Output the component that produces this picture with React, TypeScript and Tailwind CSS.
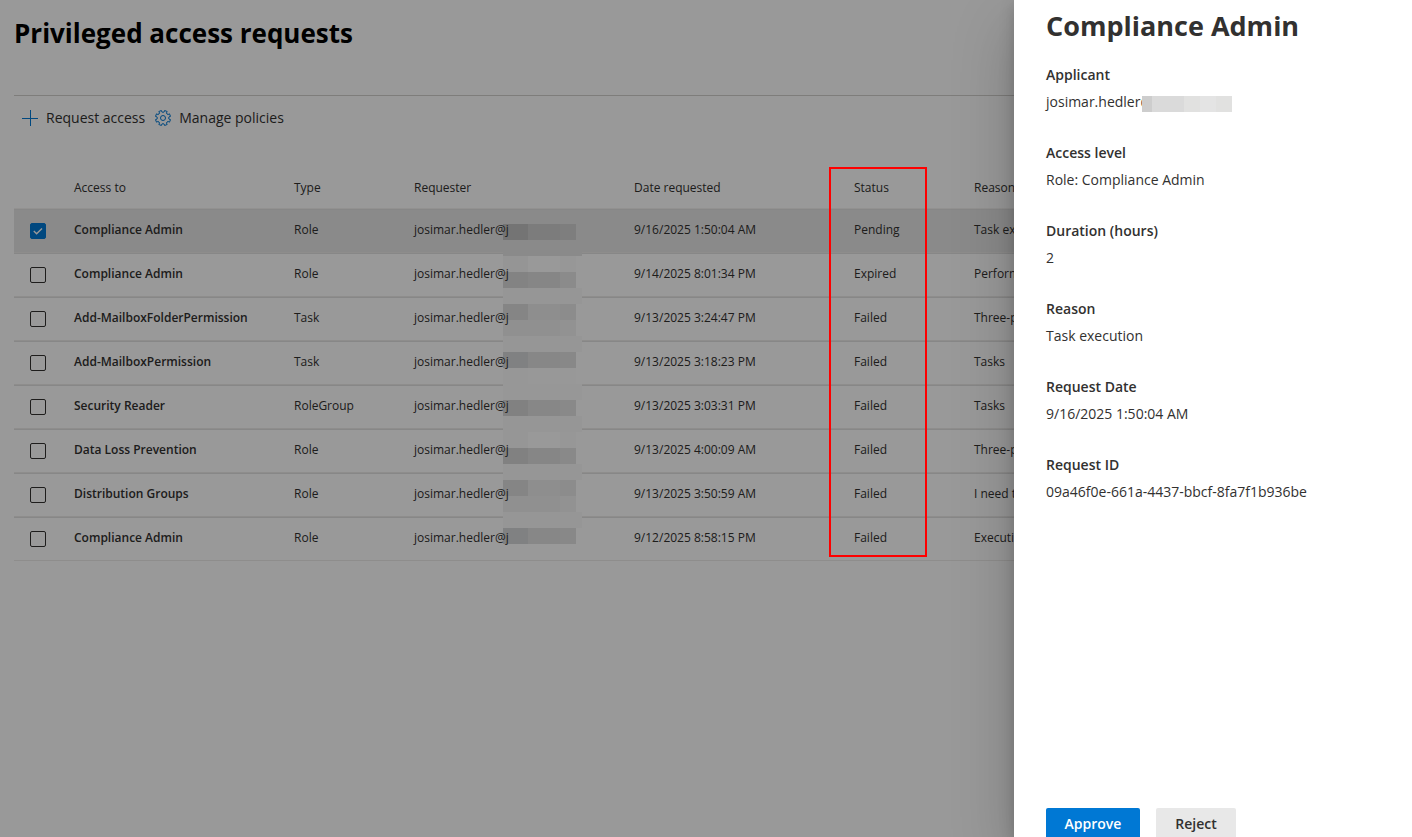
import { useState } from 'react'
import clsx from 'clsx'

type AccessRequest = {
  id: number
  access: string
  type: string
  date: string
  status: string
  reason: string
}

const requester = 'josimar.hedler@j'

const requests: AccessRequest[] = [
  { id: 1, access: 'Compliance Admin', type: 'Role', date: '9/16/2025 1:50:04 AM', status: 'Pending', reason: 'Task exe' },
  { id: 2, access: 'Compliance Admin', type: 'Role', date: '9/14/2025 8:01:34 PM', status: 'Expired', reason: 'Perform' },
  { id: 3, access: 'Add-MailboxFolderPermission', type: 'Task', date: '9/13/2025 3:24:47 PM', status: 'Failed', reason: 'Three-p' },
  { id: 4, access: 'Add-MailboxPermission', type: 'Task', date: '9/13/2025 3:18:23 PM', status: 'Failed', reason: 'Tasks' },
  { id: 5, access: 'Security Reader', type: 'RoleGroup', date: '9/13/2025 3:03:31 PM', status: 'Failed', reason: 'Tasks' },
  { id: 6, access: 'Data Loss Prevention', type: 'Role', date: '9/13/2025 4:00:09 AM', status: 'Failed', reason: 'Three-p' },
  { id: 7, access: 'Distribution Groups', type: 'Role', date: '9/13/2025 3:50:59 AM', status: 'Failed', reason: 'I need t' },
  { id: 8, access: 'Compliance Admin', type: 'Role', date: '9/12/2025 8:58:15 PM', status: 'Failed', reason: 'Executio' },
]

const details = [
  { label: 'Access level', value: 'Role: Compliance Admin' },
  { label: 'Duration (hours)', value: '2' },
  { label: 'Reason', value: 'Task execution' },
  { label: 'Request Date', value: '9/16/2025 1:50:04 AM' },
  { label: 'Request ID', value: '09a46f0e-661a-4437-bbcf-8fa7f1b936be' },
]

// Redaction tiles over the requester column, one entry per 16px band
const bands = [
  ['bg-[#c1c1c1]', 'bg-[#cfcfcf]', 'bg-[#d2d2d2]', 'bg-transparent'],
  ['bg-[#e6e6e6]', 'bg-[#e6e6e6]', 'bg-[#e6e6e6]', 'bg-[#e6e6e6]'],
  ['bg-[#f8f8f8]', 'bg-[#ffffff]', 'bg-[#fcfcfc]', 'bg-transparent'],
  ['bg-[#dadada]', 'bg-[#e0e0e0]', 'bg-[#e8e8e8]', 'bg-transparent'],
  ['bg-[#fafafa]', 'bg-[#fafafa]', 'bg-[#fafafa]', 'bg-[#fafafa]'],
  ['bg-[#dedede]', 'bg-[#ededed]', 'bg-[#eaeaea]', 'bg-transparent'],
  ['bg-[#f1f1f1]', 'bg-[#f1f1f1]', 'bg-[#f3f3f3]', 'bg-transparent'],
  ['bg-[#fafafa]', 'bg-[#fafafa]', 'bg-[#fafafa]', 'bg-[#fafafa]'],
  ['bg-[#d6d7d9]', 'bg-[#e2e2e2]', 'bg-[#e3e3e3]', 'bg-transparent'],
  ['bg-[#fcfcfc]', 'bg-[#fdfdfd]', 'bg-[#fdfdfd]', 'bg-transparent'],
  ['bg-[#fcfcfc]', 'bg-[#fcfcfc]', 'bg-[#fcfcfc]', 'bg-[#fcfcfc]'],
  ['bg-[#d8d8d8]', 'bg-[#e2e2e2]', 'bg-[#e5e5e5]', 'bg-transparent'],
  ['bg-[#fafafa]', 'bg-[#fafafa]', 'bg-[#fafafa]', 'bg-[#fafafa]'],
  ['bg-[#fafafa]', 'bg-[#ffffff]', 'bg-[#fcfcfc]', 'bg-transparent'],
  ['bg-[#d8d8d8]', 'bg-[#e0e0e0]', 'bg-[#e5e5e5]', 'bg-transparent'],
  ['bg-[#fafafa]', 'bg-[#fafafa]', 'bg-[#fafafa]', 'bg-[#fafafa]'],
  ['bg-[#dedede]', 'bg-[#ededed]', 'bg-[#eaeaea]', 'bg-transparent'],
  ['bg-[#f1f1f1]', 'bg-[#f1f1f1]', 'bg-[#f3f3f3]', 'bg-transparent'],
  ['bg-[#fafafa]', 'bg-[#fafafa]', 'bg-[#fafafa]', 'bg-[#fafafa]'],
  ['bg-[#d6d7d9]', 'bg-[#e2e2e2]', 'bg-[#e3e3e3]', 'bg-transparent'],
]

const panelTiles = [
  'w-[10px] bg-[#cdcdcd]',
  'w-8 bg-[#dadada]',
  'w-4 bg-[#e1e1e0]',
  'w-4 bg-[#e4e4e4]',
  'w-4 bg-[#e1e1e0]',
]

// Eight-tooth gear outline
const gearPath = Array.from({ length: 8 }, (_, i) => {
  const point = (deg: number, r: number) => {
    const a = ((i * 45 + deg) * Math.PI) / 180
    return `${(8 + r * Math.sin(a)).toFixed(2)} ${(8 - r * Math.cos(a)).toFixed(2)}`
  }
  return `${i === 0 ? 'M' : 'L'}${point(12, 7.7)} L${point(33, 7.7)} L${point(34, 6.2)} Q${point(45, 5.2)} ${point(56, 6.2)}`
}).join(' ') + 'Z'

function PlusIcon() {
  return (
    <svg width="16" height="16" viewBox="0 0 16 16" fill="none" stroke="#0078d4" aria-hidden="true">
      <path d="M8.5 0v16M0 8.5h16" />
    </svg>
  )
}

function GearIcon() {
  return (
    <svg width="16" height="16" viewBox="0 0 16 16" fill="none" stroke="#0078d4" aria-hidden="true">
      <path d={gearPath} />
      <circle cx="8" cy="8" r="2.5" />
    </svg>
  )
}

function Checkbox({ label, checked, onChange }: { label: string; checked: boolean; onChange: () => void }) {
  return (
    <label className="relative flex size-4">
      <input
        type="checkbox"
        aria-label={label}
        checked={checked}
        onChange={onChange}
        className="size-4 appearance-none rounded-xs border border-[#323130] checked:border-[#0078d4] checked:bg-[#0078d4]"
      />
      {checked && (
        <svg className="pointer-events-none absolute inset-0" width="16" height="16" viewBox="0 0 16 16" fill="none" stroke="#fff" strokeWidth="1.4">
          <path d="M3.8 8l2.8 2.8 5.4-5.2" />
        </svg>
      )}
    </label>
  )
}

function RequestsTable() {
  const [selected, setSelected] = useState(1)
  const cell = 'px-3 pb-0.5 whitespace-nowrap'

  return (
    <div className="relative mt-6">
      <table className="w-[1188px] table-fixed border-separate border-spacing-0 text-left text-xs text-[#323130]">
        <colgroup>
          <col className="w-12" />
          <col className="w-[220px]" />
          <col className="w-[120px]" />
          <col className="w-[220px]" />
          <col className="w-[220px]" />
          <col className="w-[120px]" />
          <col className="w-[240px]" />
        </colgroup>
        <thead>
          <tr className="h-[43px] *:border-b *:border-[#f3f2f1] *:px-3 *:pt-0.5 *:font-normal">
            <th aria-label="Selection" />
            <th>Access to</th>
            <th>Type</th>
            <th>Requester</th>
            <th>Date requested</th>
            <th>Status</th>
            <th>Reason</th>
          </tr>
        </thead>
        <tbody>
          {requests.map(r => (
            <tr
              key={r.id}
              className={clsx(
                'h-11 *:border-y *:border-t-[#e1e1e1] *:border-b-[#edebe9]',
                r.id === selected && 'bg-[#e6e6e6]',
              )}
            >
              <td className="px-4">
                <Checkbox
                  label={`Select ${r.access}`}
                  checked={r.id === selected}
                  onChange={() => setSelected(r.id)}
                />
              </td>
              <td className={clsx(cell, 'font-semibold')}>{r.access}</td>
              <td className={cell}>{r.type}</td>
              <td className={cell}>
                <span className="relative z-1">{requester}</span>
              </td>
              <td className={cell}>{r.date}</td>
              <td className={cell}>{r.status}</td>
              <td className={cell}>{r.reason}</td>
            </tr>
          ))}
        </tbody>
      </table>

      <div className="absolute top-[58px] left-[489px]" aria-hidden="true">
        {bands.map((band, i) => (
          <div key={i} className="flex h-4">
            <div className={clsx('w-[25px]', band[0])} />
            <div className={clsx('w-8', band[1])} />
            <div className={clsx('w-4', band[2])} />
            <div className={clsx('w-[6px]', band[3])} />
          </div>
        ))}
      </div>

      {/* Status column highlight stays bright above the dimmed page */}
      <div className="pointer-events-none absolute top-px left-[815px] z-20 h-[390px] w-[98px] border-2 border-[#ff0000]" />
    </div>
  )
}

function DetailsPanel() {
  return (
    <aside
      aria-labelledby="panel-title"
      className="absolute inset-y-0 right-0 z-30 flex w-[398px] flex-col bg-white px-8 text-sm text-[#323130] shadow-[0_26px_58px_rgba(0,0,0,0.22),0_5px_14px_rgba(0,0,0,0.18)]"
    >
      <h2 id="panel-title" className="mt-2 text-[27px] leading-9 font-bold">
        Compliance Admin
      </h2>
      <dl className="mt-[21px] flex flex-1 flex-col gap-[31px] leading-5">
        <div className="relative">
          <dt className="font-semibold">Applicant</dt>
          <dd className="mt-[7px]">josimar.hedler@</dd>
          <dd className="absolute top-[31px] left-24 flex h-4" aria-hidden="true">
            {panelTiles.map((tile, i) => (
              <span key={i} className={tile} />
            ))}
          </dd>
        </div>
        {details.map(d => (
          <div key={d.label}>
            <dt className="font-semibold">{d.label}</dt>
            <dd className="mt-[7px]">{d.value}</dd>
          </div>
        ))}
      </dl>
      <div className="flex h-[29px] gap-4 overflow-hidden font-semibold">
        <button className="h-8 w-[94px] shrink-0 rounded-xs bg-[#0078d4] text-white">Approve</button>
        <button className="h-8 w-20 shrink-0 rounded-xs bg-[#e8e8e8]">Reject</button>
      </div>
    </aside>
  )
}

export default function App() {
  return (
    <div className="relative min-h-screen overflow-hidden bg-white font-['Open_Sans','Noto_Sans',sans-serif]">
      <main className="mr-[398px] overflow-hidden pl-[14px]">
        <h1 className="pt-[15px] text-[26px] leading-9 font-bold text-black">Privileged access requests</h1>
        <div className="mt-11 flex h-[47px] items-center gap-2.5 border-t border-[#d2d0ce] px-2 pb-0.5 text-sm text-[#323130]">
          <button className="flex items-center gap-2">
            <PlusIcon />
            Request access
          </button>
          <button className="flex items-center gap-2">
            <GearIcon />
            Manage policies
          </button>
        </div>
        <RequestsTable />
      </main>
      <div className="absolute inset-0 z-10 bg-black/40" />
      <DetailsPanel />
    </div>
  )
}
